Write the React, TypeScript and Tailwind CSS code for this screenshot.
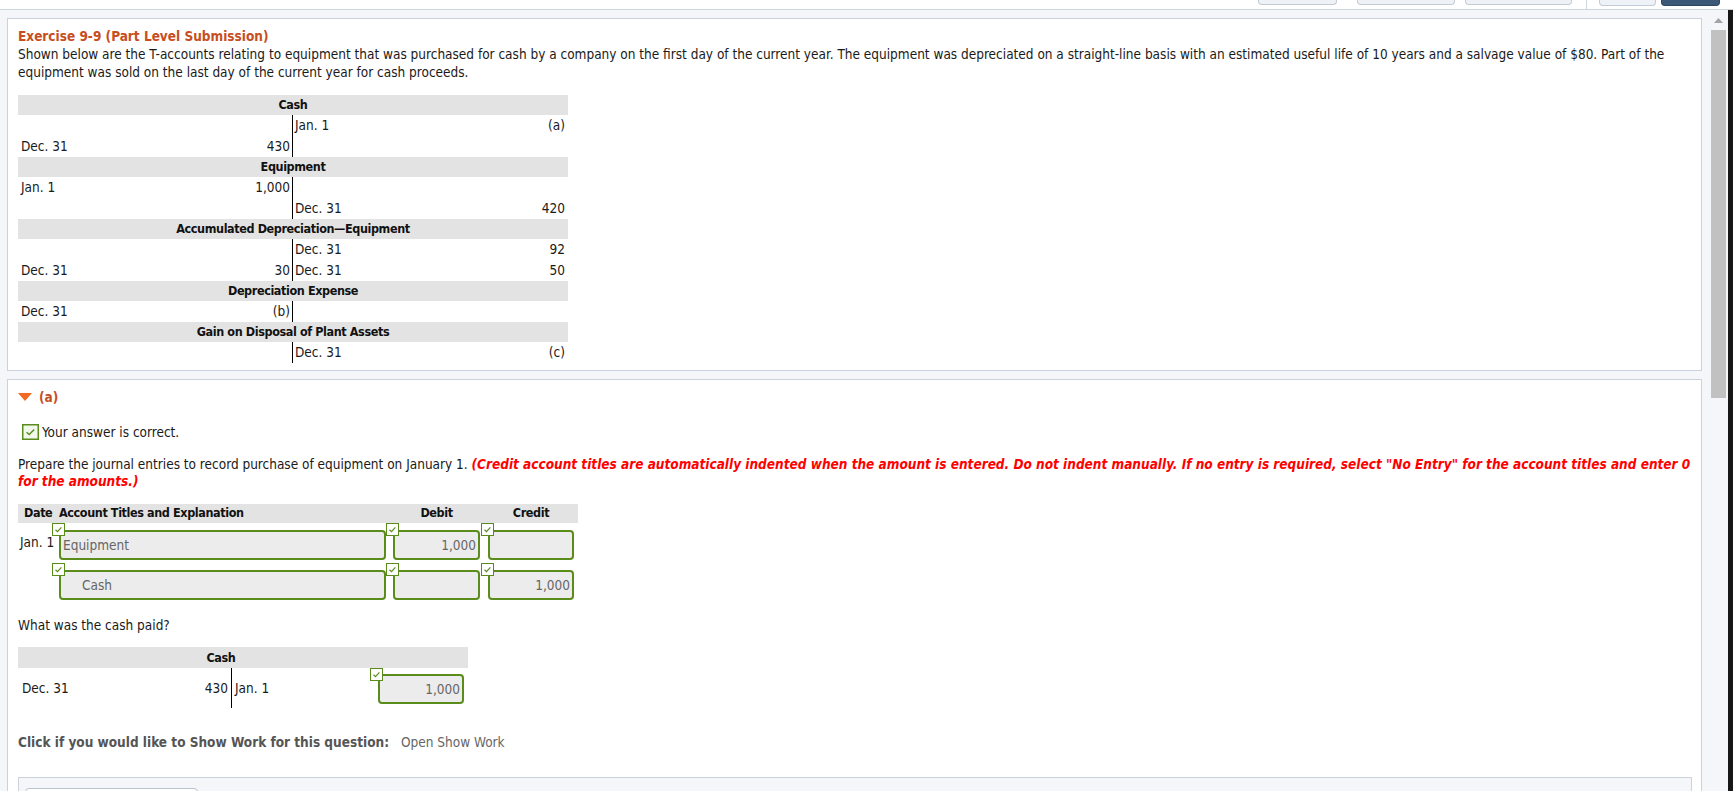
import React from "react";

const FONT = "font-['DejaVu_Sans_Condensed','DejaVu_Sans',sans-serif] font-stretch-semi-condensed";

function SmallCheck() {
  return (
    <svg width="13" height="13" viewBox="0 0 13 13" className="block">
      <rect x="0.5" y="0.5" width="12" height="12" fill="#fff" stroke="#5a8c1c" strokeWidth="1" />
      <path d="M3.5 6.8 L5.5 8.6 L9.4 4.4" fill="none" stroke="#5a8c1c" strokeWidth="1.2" />
    </svg>
  );
}

function BigCheck() {
  return (
    <svg width="17" height="16" viewBox="0 0 17 16" className="block">
      <rect x="0.75" y="0.75" width="15.5" height="14.5" fill="#f3f8ec" stroke="#5a8c1c" strokeWidth="1.5" />
      <path d="M4.6 8.2 L7.2 10.6 L12.2 5.4" fill="none" stroke="#5a8c1c" strokeWidth="1.4" />
    </svg>
  );
}

type Row = [string, string, string, string];

function TAccount({ title, rows }: { title: string; rows: Row[] }) {
  return (
    <div>
      <div className="h-[20px] bg-[#e3e3e3] text-center text-[12.5px] font-bold leading-[20px] tracking-[-0.4px] text-[#111]">
        {title}
      </div>
      {rows.map((r, i) => (
        <div key={i} className="flex h-[21px]">
          <div className="flex w-[274px] items-center justify-between pl-[3px] pr-[2px]">
            <span>{r[0]}</span>
            <span>{r[1]}</span>
          </div>
          <div className="w-px bg-black" />
          <div className="flex flex-1 items-center justify-between pl-[2px] pr-[3px]">
            <span>{r[2]}</span>
            <span>{r[3]}</span>
          </div>
        </div>
      ))}
    </div>
  );
}

function Field({ w, value, align = "left", indent = false }: { w: string; value: string; align?: "left" | "right"; indent?: boolean }) {
  return (
    <div className="relative pt-[7px]">
      <div className="absolute left-[-7px] top-0">
        <SmallCheck />
      </div>
      <div
        className={`${w} flex h-[30px] items-center rounded-[4px] border-[2.5px] border-[#5a8c1c] bg-[#ececec] text-[#666] ${
          align === "right" ? "justify-end pr-[2px]" : indent ? "pl-[21px]" : "pl-[2px]"
        }`}
      >
        {value}
      </div>
    </div>
  );
}

export default function App() {
  return (
    <div className={`${FONT} flex h-[791px] w-[1733px] flex-col overflow-hidden bg-[#f4f6f9] text-[13.5px] text-[#1a1a1a]`}>
      {/* top strip */}
      <div className="flex h-[10px] shrink-0 items-start justify-end border-b border-[#cdd5df] bg-white pr-[13px]">
        <div className="h-[5px] w-[79px] rounded-b-[4px] border border-t-0 border-[#c3ccd6] bg-[#eef2f6]" />
        <div className="ml-[20px] h-[5px] w-[98px] rounded-b-[4px] border border-t-0 border-[#c3ccd6] bg-[#eef2f6]" />
        <div className="ml-[10px] h-[5px] w-[107px] rounded-b-[4px] border border-t-0 border-[#c3ccd6] bg-[#eef2f6]" />
        <div className="ml-[14px] h-[9px] w-px bg-[#cdd5df]" />
        <div className="ml-[12px] h-[6px] w-[57px] rounded-b-[4px] border border-t-0 border-[#c3ccd6] bg-[#eef2f6]" />
        <div className="ml-[5px] h-[6px] w-[59px] rounded-b-[4px] border border-t-0 border-[#2d4763] bg-[#3b5877]" />
      </div>

      <div className="flex min-h-0 flex-1">
        <div className="flex w-[1708px] flex-col gap-[8px] overflow-hidden pl-[7px] pr-[6px] pt-[8px]">
          {/* Panel 1 */}
          <div className="shrink-0 border border-[#c9d2dd] bg-white pb-[7px] pl-[10px] pr-[10px] pt-[8px]">
            <div className="text-[13.5px] font-bold leading-[18px] text-[#c74e1e]">Exercise 9-9 (Part Level Submission)</div>
            <p className="leading-[18px]">
              Shown below are the T-accounts relating to equipment that was purchased for cash by a company on the first day of the current year. The equipment was depreciated on a straight-line basis with an estimated useful life of 10 years and a salvage value of $80. Part of the equipment was sold on the last day of the current year for cash proceeds.
            </p>
            <div className="mt-[14px] w-[550px]">
              <TAccount title="Cash" rows={[["", "", "Jan. 1", "(a)"], ["Dec. 31", "430", "", ""]]} />
              <TAccount title="Equipment" rows={[["Jan. 1", "1,000", "", ""], ["", "", "Dec. 31", "420"]]} />
              <TAccount
                title="Accumulated Depreciation—Equipment"
                rows={[["", "", "Dec. 31", "92"], ["Dec. 31", "30", "Dec. 31", "50"]]}
              />
              <TAccount title="Depreciation Expense" rows={[["Dec. 31", "(b)", "", ""]]} />
              <TAccount title="Gain on Disposal of Plant Assets" rows={[["", "", "Dec. 31", "(c)"]]} />
            </div>
          </div>

          {/* Panel 2 */}
          <div className="shrink-0 border border-[#c9d2dd] bg-white pl-[10px] pr-[9px] pt-[8px]">
            <div className="flex h-[18px] items-center gap-[7px] font-bold text-[#c74e1e]">
              <svg width="14" height="8" viewBox="0 0 14 8" className="block">
                <path d="M0 0 H14 L7 8 Z" fill="#f26a21" />
              </svg>
              <span>(a)</span>
            </div>

            <div className="mt-[17px] flex h-[18px] items-center gap-[3px] pl-[4px]">
              <BigCheck />
              <span>Your answer is correct.</span>
            </div>

            <p className="mt-[15px] leading-[17px]">
              Prepare the journal entries to record purchase of equipment on January 1.{" "}
              <span className="font-bold italic text-[#ff0000]">
                (Credit account titles are automatically indented when the amount is entered. Do not indent manually. If no entry is required, select "No Entry" for the account titles and enter 0 for the amounts.)
              </span>
            </p>

            {/* Journal table */}
            <div className="mt-[14px] w-[560px]">
              <div className="flex h-[19px] items-center bg-[#e3e3e3] text-[12.5px] font-bold tracking-[-0.4px] text-[#111]">
                <span className="w-[41px] pl-[6px]">Date</span>
                <span className="w-[334px]">Account Titles and Explanation</span>
                <span className="w-[87px] text-center">Debit</span>
                <span className="ml-[8px] w-[86px] text-center">Credit</span>
              </div>
              <div className="flex flex-col gap-[3px]">
                <div className="flex items-start">
                  <div className="flex h-[37px] w-[41px] items-end pb-[8px] pl-[2px]">Jan. 1</div>
                  <Field w="w-[327px]" value="Equipment" />
                  <div className="ml-[7px]">
                    <Field w="w-[87px]" value="1,000" align="right" />
                  </div>
                  <div className="ml-[8px]">
                    <Field w="w-[86px]" value="" />
                  </div>
                </div>
                <div className="flex items-start">
                  <div className="w-[41px]" />
                  <Field w="w-[327px]" value="Cash" indent />
                  <div className="ml-[7px]">
                    <Field w="w-[87px]" value="" />
                  </div>
                  <div className="ml-[8px]">
                    <Field w="w-[86px]" value="1,000" align="right" />
                  </div>
                </div>
              </div>
            </div>

            <p className="mt-[16px] leading-[18px]">What was the cash paid?</p>

            {/* small T-account */}
            <div className="mt-[13px] w-[450px]">
              <div className="h-[21px] bg-[#e3e3e3] text-[12.5px] font-bold leading-[21px] tracking-[-0.4px] text-[#111]">
                <div className="w-[406px] text-center">Cash</div>
              </div>
              <div className="flex h-[40px]">
                <div className="flex w-[213px] items-center justify-between pl-[4px] pr-[3px]">
                  <span>Dec. 31</span>
                  <span>430</span>
                </div>
                <div className="w-px bg-black" />
                <div className="flex w-[146px] items-center pl-[3px]">Jan. 1</div>
                <div className="relative pt-[6px]">
                  <div className="absolute left-[-8px] top-0">
                    <SmallCheck />
                  </div>
                  <div className="flex h-[30px] w-[86px] items-center justify-end rounded-[4px] border-[2.5px] border-[#5a8c1c] bg-[#ececec] pr-[2px] text-[#666]">
                    1,000
                  </div>
                </div>
              </div>
            </div>

            <div className="mt-[25px] flex h-[18px] items-center">
              <span className="font-bold text-[#555]">Click if you would like to Show Work for this question:</span>
              <span className="ml-[12px] text-[#666]">Open Show Work</span>
            </div>

            <div className="mt-[26px] h-[40px] border border-[#c9d2dd] bg-[#f4f6f9] pl-[6px] pt-[6px]">
              <div className="inline-flex h-[26px] items-start rounded-[4px] border border-[#b9c3cd] bg-white px-[8px] pt-[1px] text-[11px] font-bold uppercase leading-[11px] tracking-[0.5px] text-[#3d5068]">
                Show list of accounts
              </div>
            </div>
          </div>
        </div>

        {/* scrollbar */}
        <div className="relative w-[20px] shrink-0">
          <svg width="9" height="5" viewBox="0 0 9 5" className="absolute left-[6px] top-[8px] block">
            <path d="M0 5 L4.5 0 L9 5 Z" fill="#a3a3a3" />
          </svg>
          <div className="absolute left-[3px] top-[20px] h-[368px] w-[15px] bg-[#c1c1c1]" />
        </div>
        <div className="w-[5px] shrink-0 bg-[#171717]" />
      </div>
    </div>
  );
}
